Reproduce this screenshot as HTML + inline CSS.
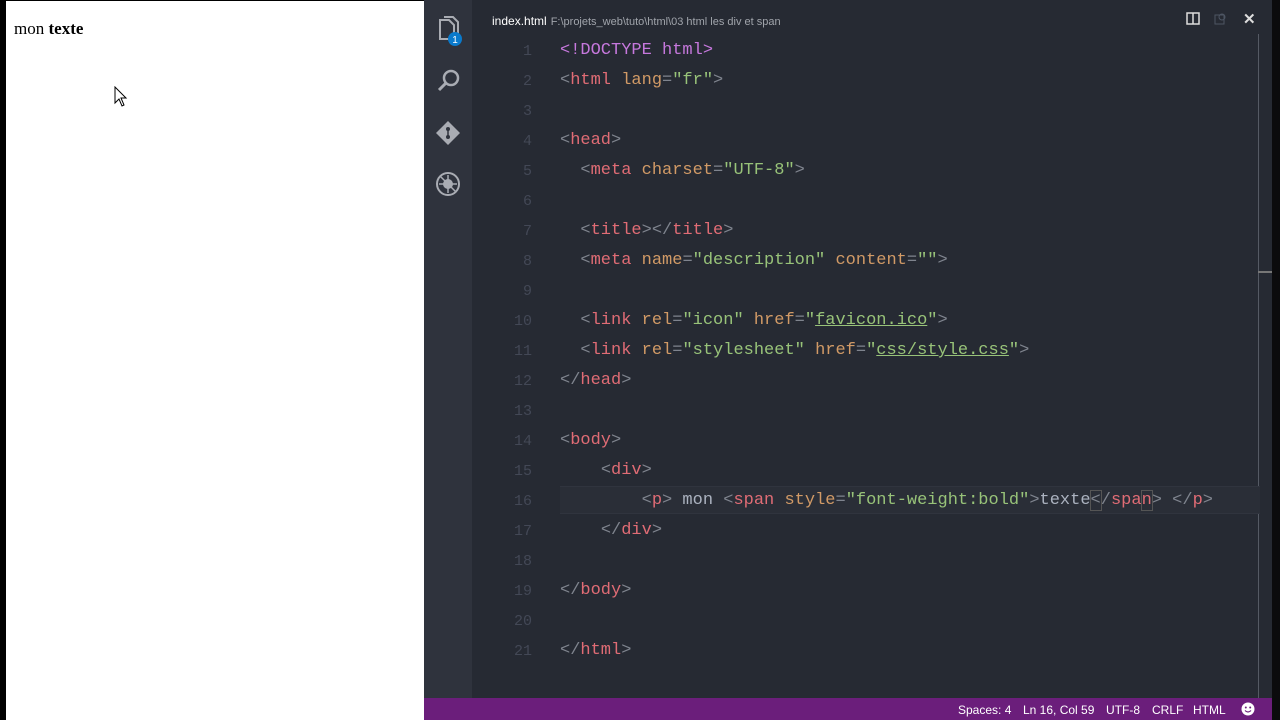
<!DOCTYPE html>
<html><head><meta charset="utf-8"><style>
*{margin:0;padding:0;box-sizing:border-box}
body{width:1280px;height:720px;overflow:hidden;background:#262a33;position:relative;font-family:"Liberation Sans",sans-serif}
#left{position:absolute;left:0;top:0;width:424px;height:720px;background:#fff;border-left:6px solid #000;border-top:1px solid #000}
#left p{position:absolute;left:8px;top:18px;font-family:"Liberation Serif",serif;font-size:17px;color:#000}
#act{position:absolute;left:424px;top:0;width:48px;height:698px;background:#2f333d}
#ed{position:absolute;left:472px;top:0;width:800px;height:698px;background:#262a33}
#strip{position:absolute;left:1272px;top:0;width:8px;height:720px;background:#0b0b0d}
#status{position:absolute;left:424px;top:698px;width:848px;height:22px;background:#6b1e7b;color:#fff;font-size:12px}
#status span{position:absolute;top:5px}
.title{position:absolute;left:20px;top:14px;font-size:12px;color:#fff}
.title small{font-size:11px;color:#a0a4ab;margin-left:4px}
.ln{position:absolute;left:0;width:60px;text-align:right;font-family:"Liberation Mono",monospace;font-size:15px;color:#434856}
.code{position:absolute;left:88px;font-family:"Liberation Mono",monospace;font-size:17px;color:#abb2bf;white-space:pre}
.g{color:#7f848e}.t{color:#e06c75}.a{color:#d19a66}.s{color:#98c379}.k{color:#c678dd}.u{text-decoration:underline}
#cur{position:absolute;left:88px;top:486px;width:700px;height:28px;border-top:1px solid #30343e;border-bottom:1px solid #30343e;background:#2a2e37}
</style></head><body>
<div id="left"><p>mon <b>texte</b></p>
<svg style="position:absolute;left:108px;top:85px" width="14" height="22" viewBox="0 0 14 22"><path d="M1 1 L1 17 L5 13 L8 20 L10 19 L7 12 L12 12 Z" fill="#fff" stroke="#000" stroke-width="1"/></svg></div>
<div id="act">
<svg style="position:absolute;left:12px;top:16px" width="30" height="32" viewBox="0 0 30 32"><path d="M4 4h9l5 5v14H4z M8 1h9l5 5v13" fill="none" stroke="#a9acb3" stroke-width="2"/><circle cx="19" cy="23" r="7" fill="#0a7acc"/><text x="19" y="27" font-size="10" fill="#fff" text-anchor="middle" font-family="Liberation Sans">1</text></svg>
<svg style="position:absolute;left:12px;top:68px" width="26" height="26" viewBox="0 0 26 26"><circle cx="15" cy="10" r="7" fill="none" stroke="#a9acb3" stroke-width="2.5"/><path d="M10 15 L3 22" stroke="#a9acb3" stroke-width="3"/></svg>
<svg style="position:absolute;left:11px;top:120px" width="26" height="26" viewBox="0 0 26 26"><path d="M13 1 L25 13 L13 25 L1 13Z" fill="#a9acb3"/><circle cx="13" cy="9" r="2" fill="#2f333d"/><circle cx="13" cy="17" r="2" fill="#2f333d"/><path d="M13 9v8" stroke="#2f333d" stroke-width="1.5"/></svg>
<svg style="position:absolute;left:11px;top:171px" width="26" height="26" viewBox="0 0 26 26"><circle cx="13" cy="13" r="11" fill="none" stroke="#a9acb3" stroke-width="2"/><circle cx="13" cy="13" r="5" fill="#a9acb3"/><path d="M5 5l16 16M13 4v18M4 13h18" stroke="#a9acb3" stroke-width="1.5"/></svg>
</div>
<div id="ed">
<div class="title">index.html<small>F:\projets_web\tuto\html\03 html les div et span</small></div>
<svg style="position:absolute;left:714px;top:12px" width="14" height="13"><rect x="1" y="1" width="12" height="11" fill="none" stroke="#ddd" stroke-width="1.5"/><path d="M7 1v11" stroke="#ddd" stroke-width="1.5"/></svg>
<svg style="position:absolute;left:742px;top:11px" width="14" height="14"><rect x="1" y="4" width="9" height="9" fill="none" stroke="#4d5563"/><circle cx="8" cy="6" r="3" fill="none" stroke="#4d5563"/></svg>
<div style="position:absolute;left:771px;top:10px;color:#ddd;font-size:15px;font-weight:bold">✕</div>
<div style="position:absolute;left:786px;top:34px;width:1px;height:664px;background:#555a64"></div>
<div style="position:absolute;left:786px;top:271px;width:14px;height:2px;background:#777"></div>
<div id="cur"></div>
<div class="ln" style="top:43px">1</div><div class="code" style="top:41px"><span class="k">&lt;!DOCTYPE html&gt;</span></div>
<div class="ln" style="top:73px">2</div><div class="code" style="top:71px"><span class="g">&lt;</span><span class="t">html</span> <span class="a">lang</span><span class="g">=</span><span class="s">"fr"</span><span class="g">&gt;</span></div>
<div class="ln" style="top:103px">3</div>
<div class="ln" style="top:133px">4</div><div class="code" style="top:131px"><span class="g">&lt;</span><span class="t">head</span><span class="g">&gt;</span></div>
<div class="ln" style="top:163px">5</div><div class="code" style="top:161px">  <span class="g">&lt;</span><span class="t">meta</span> <span class="a">charset</span><span class="g">=</span><span class="s">"UTF-8"</span><span class="g">&gt;</span></div>
<div class="ln" style="top:193px">6</div>
<div class="ln" style="top:223px">7</div><div class="code" style="top:221px">  <span class="g">&lt;</span><span class="t">title</span><span class="g">&gt;&lt;/</span><span class="t">title</span><span class="g">&gt;</span></div>
<div class="ln" style="top:253px">8</div><div class="code" style="top:251px">  <span class="g">&lt;</span><span class="t">meta</span> <span class="a">name</span><span class="g">=</span><span class="s">"description"</span> <span class="a">content</span><span class="g">=</span><span class="s">""</span><span class="g">&gt;</span></div>
<div class="ln" style="top:283px">9</div>
<div class="ln" style="top:313px">10</div><div class="code" style="top:311px">  <span class="g">&lt;</span><span class="t">link</span> <span class="a">rel</span><span class="g">=</span><span class="s">"icon"</span> <span class="a">href</span><span class="g">=</span><span class="s">"<span class="u">favicon.ico</span>"</span><span class="g">&gt;</span></div>
<div class="ln" style="top:343px">11</div><div class="code" style="top:341px">  <span class="g">&lt;</span><span class="t">link</span> <span class="a">rel</span><span class="g">=</span><span class="s">"stylesheet"</span> <span class="a">href</span><span class="g">=</span><span class="s">"<span class="u">css/style.css</span>"</span><span class="g">&gt;</span></div>
<div class="ln" style="top:373px">12</div><div class="code" style="top:371px"><span class="g">&lt;/</span><span class="t">head</span><span class="g">&gt;</span></div>
<div class="ln" style="top:403px">13</div>
<div class="ln" style="top:433px">14</div><div class="code" style="top:431px"><span class="g">&lt;</span><span class="t">body</span><span class="g">&gt;</span></div>
<div class="ln" style="top:463px">15</div><div class="code" style="top:461px">    <span class="g">&lt;</span><span class="t">div</span><span class="g">&gt;</span></div>
<div class="ln" style="top:493px">16</div><div class="code" style="top:491px">        <span class="g">&lt;</span><span class="t">p</span><span class="g">&gt;</span> mon <span class="g">&lt;</span><span class="t">span</span> <span class="a">style</span><span class="g">=</span><span class="s">"font-weight:bold"</span><span class="g">&gt;</span>texte<span class="g" style="outline:1px solid #555">&lt;</span><span class="g">/</span><span class="t">spa</span><span class="t" style="outline:1px solid #555">n</span><span class="g">&gt;</span> <span class="g">&lt;/</span><span class="t">p</span><span class="g">&gt;</span></div>
<div class="ln" style="top:523px">17</div><div class="code" style="top:521px">    <span class="g">&lt;/</span><span class="t">div</span><span class="g">&gt;</span></div>
<div class="ln" style="top:553px">18</div>
<div class="ln" style="top:583px">19</div><div class="code" style="top:581px"><span class="g">&lt;/</span><span class="t">body</span><span class="g">&gt;</span></div>
<div class="ln" style="top:613px">20</div>
<div class="ln" style="top:643px">21</div><div class="code" style="top:641px"><span class="g">&lt;/</span><span class="t">html</span><span class="g">&gt;</span></div>
</div>
<div id="strip"></div>
<div id="status"><span style="left:534px">Spaces: 4</span><span style="left:599px">Ln 16, Col 59</span><span style="left:682px">UTF-8</span><span style="left:728px">CRLF</span><span style="left:769px">HTML</span>
<svg style="position:absolute;left:817px;top:4px" width="14" height="14" viewBox="0 0 14 14"><circle cx="7" cy="7" r="6.5" fill="#fff"/><circle cx="4.8" cy="5.5" r="1" fill="#6b1e7b"/><circle cx="9.2" cy="5.5" r="1" fill="#6b1e7b"/><path d="M4 8.5 Q7 11.5 10 8.5" stroke="#6b1e7b" stroke-width="1.2" fill="none"/></svg></div>
</body></html>
